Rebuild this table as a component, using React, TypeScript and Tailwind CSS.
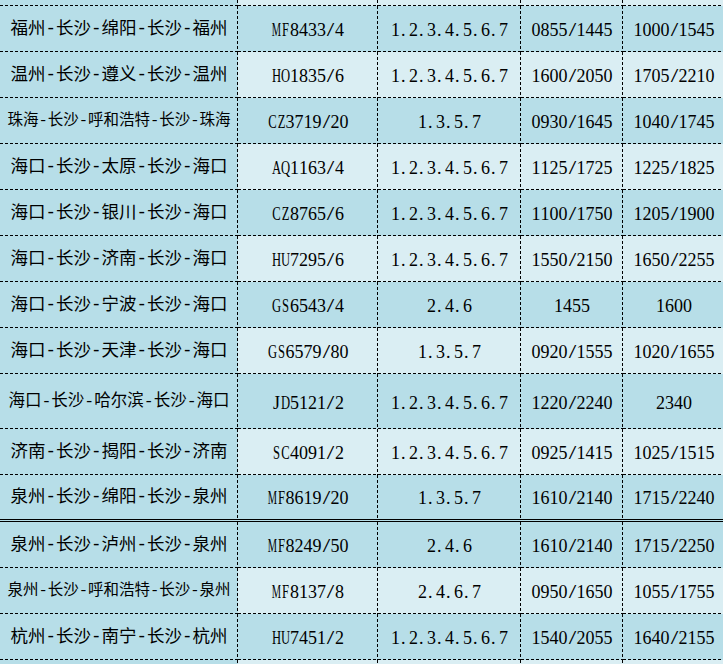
import React from "react";

// 航线 / 航班号 / 班期 / 起飞落地时刻
interface IRoute {
  route: string;
  flight: string;
  days: string;
  dep: string;
  arr: string;
  dark: boolean;
  h: string;
  size: string;
  double?: boolean;
}

const DARK = "bg-[#b7dee8]";
const LIGHT = "bg-[#daeef3]";

// dashed lines on the right and bottom of each cell, like the sheet's grid
const dashed =
  "bg-[image:repeating-linear-gradient(90deg,#000_0_3px,transparent_3px_5px),repeating-linear-gradient(180deg,#000_0_3px,transparent_3px_5px)] bg-size-[100%_1px,1px_100%] bg-position-[left_bottom,right_top] bg-no-repeat";
const dashedDouble =
  "bg-[image:repeating-linear-gradient(180deg,#000_0_3px,transparent_3px_5px)] bg-size-[1px_100%] bg-position-[right_top] bg-no-repeat border-b-[3px] border-double border-black";

const rows: IRoute[] = [
  { route: "", flight: "", days: "", dep: "", arr: "", dark: false, h: "h-[6px]", size: "text-[17.5px]" },
  { route: "福州-长沙-绵阳-长沙-福州", flight: "MF8433/4", days: "1.2.3.4.5.6.7", dep: "0855/1445", arr: "1000/1545", dark: true, h: "h-[46px]", size: "text-[17.5px]" },
  { route: "温州-长沙-遵义-长沙-温州", flight: "HO1835/6", days: "1.2.3.4.5.6.7", dep: "1600/2050", arr: "1705/2210", dark: false, h: "h-[46px]", size: "text-[17.5px]" },
  { route: "珠海-长沙-呼和浩特-长沙-珠海", flight: "CZ3719/20", days: "1.3.5.7", dep: "0930/1645", arr: "1040/1745", dark: true, h: "h-[46px]", size: "text-[15.5px]" },
  { route: "海口-长沙-太原-长沙-海口", flight: "AQ1163/4", days: "1.2.3.4.5.6.7", dep: "1125/1725", arr: "1225/1825", dark: false, h: "h-[46px]", size: "text-[17.5px]" },
  { route: "海口-长沙-银川-长沙-海口", flight: "CZ8765/6", days: "1.2.3.4.5.6.7", dep: "1100/1750", arr: "1205/1900", dark: true, h: "h-[46px]", size: "text-[17.5px]" },
  { route: "海口-长沙-济南-长沙-海口", flight: "HU7295/6", days: "1.2.3.4.5.6.7", dep: "1550/2150", arr: "1650/2255", dark: false, h: "h-[46px]", size: "text-[17.5px]" },
  { route: "海口-长沙-宁波-长沙-海口", flight: "GS6543/4", days: "2.4.6", dep: "1455", arr: "1600", dark: true, h: "h-[46px]", size: "text-[17.5px]" },
  { route: "海口-长沙-天津-长沙-海口", flight: "GS6579/80", days: "1.3.5.7", dep: "0920/1555", arr: "1020/1655", dark: false, h: "h-[46px]", size: "text-[17.5px]" },
  { route: "海口-长沙-哈尔滨-长沙-海口", flight: "JD5121/2", days: "1.2.3.4.5.6.7", dep: "1220/2240", arr: "2340", dark: true, h: "h-[55px]", size: "text-[16.5px]" },
  { route: "济南-长沙-揭阳-长沙-济南", flight: "SC4091/2", days: "1.2.3.4.5.6.7", dep: "0925/1415", arr: "1025/1515", dark: false, h: "h-[46px]", size: "text-[17.5px]" },
  { route: "泉州-长沙-绵阳-长沙-泉州", flight: "MF8619/20", days: "1.3.5.7", dep: "1610/2140", arr: "1715/2240", dark: true, h: "h-[47px]", size: "text-[17.5px]", double: true },
  { route: "泉州-长沙-泸州-长沙-泉州", flight: "MF8249/50", days: "2.4.6", dep: "1610/2140", arr: "1715/2250", dark: true, h: "h-[46px]", size: "text-[17.5px]" },
  { route: "泉州-长沙-呼和浩特-长沙-泉州", flight: "MF8137/8", days: "2.4.6.7", dep: "0950/1650", arr: "1055/1755", dark: false, h: "h-[46px]", size: "text-[15.5px]" },
  { route: "杭州-长沙-南宁-长沙-杭州", flight: "HU7451/2", days: "1.2.3.4.5.6.7", dep: "1540/2055", arr: "1640/2155", dark: true, h: "h-[46px]", size: "text-[17.5px]" },
  { route: "", flight: "", days: "", dep: "", arr: "", dark: false, h: "h-[10px]", size: "text-[17.5px]" },
];

// the sheet uses a half-width font: every latin char takes the same 9px
function HalfWidth(props: { text: string }) {
  return (
    <span className="inline-flex font-['Liberation_Serif',serif] text-[18px]">
      {[...props.text].map((c, i) => {
        let cls = "w-[9px] flex justify-center";
        if (/[A-IK-LN-Z]/.test(c)) cls = "w-[9px] flex justify-center scale-x-[0.7]";
        if (c === "M") cls = "w-[9px] flex justify-center scale-x-[0.58]";
        if (c === ".") cls = "w-[9px] flex justify-start pl-[1px]";
        if (c === "/") cls = "w-[9px] flex justify-center scale-x-[1.5]";
        return (
          <span key={i} className={cls}>
            {c}
          </span>
        );
      })}
    </span>
  );
}

function Cell(props: { bg: string; row: IRoute; children?: React.ReactNode; className?: string }) {
  const lines = props.row.double ? dashedDouble : dashed;
  return (
    <div
      className={`${props.row.h} ${props.bg} ${lines} flex items-center justify-center pt-[2px] whitespace-nowrap overflow-hidden text-black leading-none ${props.className ?? ""}`}
    >
      {props.children}
    </div>
  );
}

export default function App() {
  return (
    <div className="w-[723px] h-[664px] overflow-hidden bg-[#daeef3]">
      <div className="grid grid-cols-[238px_140px_143px_102px_102px] w-[725px]">
        {rows.map((row, i) => {
          const bg = row.dark ? DARK : LIGHT;
          return (
            <React.Fragment key={i}>
              <Cell
                bg={DARK}
                row={row}
                className={`font-['Liberation_Mono','Noto_Sans_CJK_SC',sans-serif] ${row.size}`}
              >
                {row.route}
              </Cell>
              <Cell bg={bg} row={row}>
                <HalfWidth text={row.flight} />
              </Cell>
              <Cell bg={bg} row={row}>
                <HalfWidth text={row.days} />
              </Cell>
              <Cell bg={bg} row={row}>
                <HalfWidth text={row.dep} />
              </Cell>
              <Cell bg={bg} row={row}>
                <HalfWidth text={row.arr} />
              </Cell>
            </React.Fragment>
          );
        })}
      </div>
    </div>
  );
}
